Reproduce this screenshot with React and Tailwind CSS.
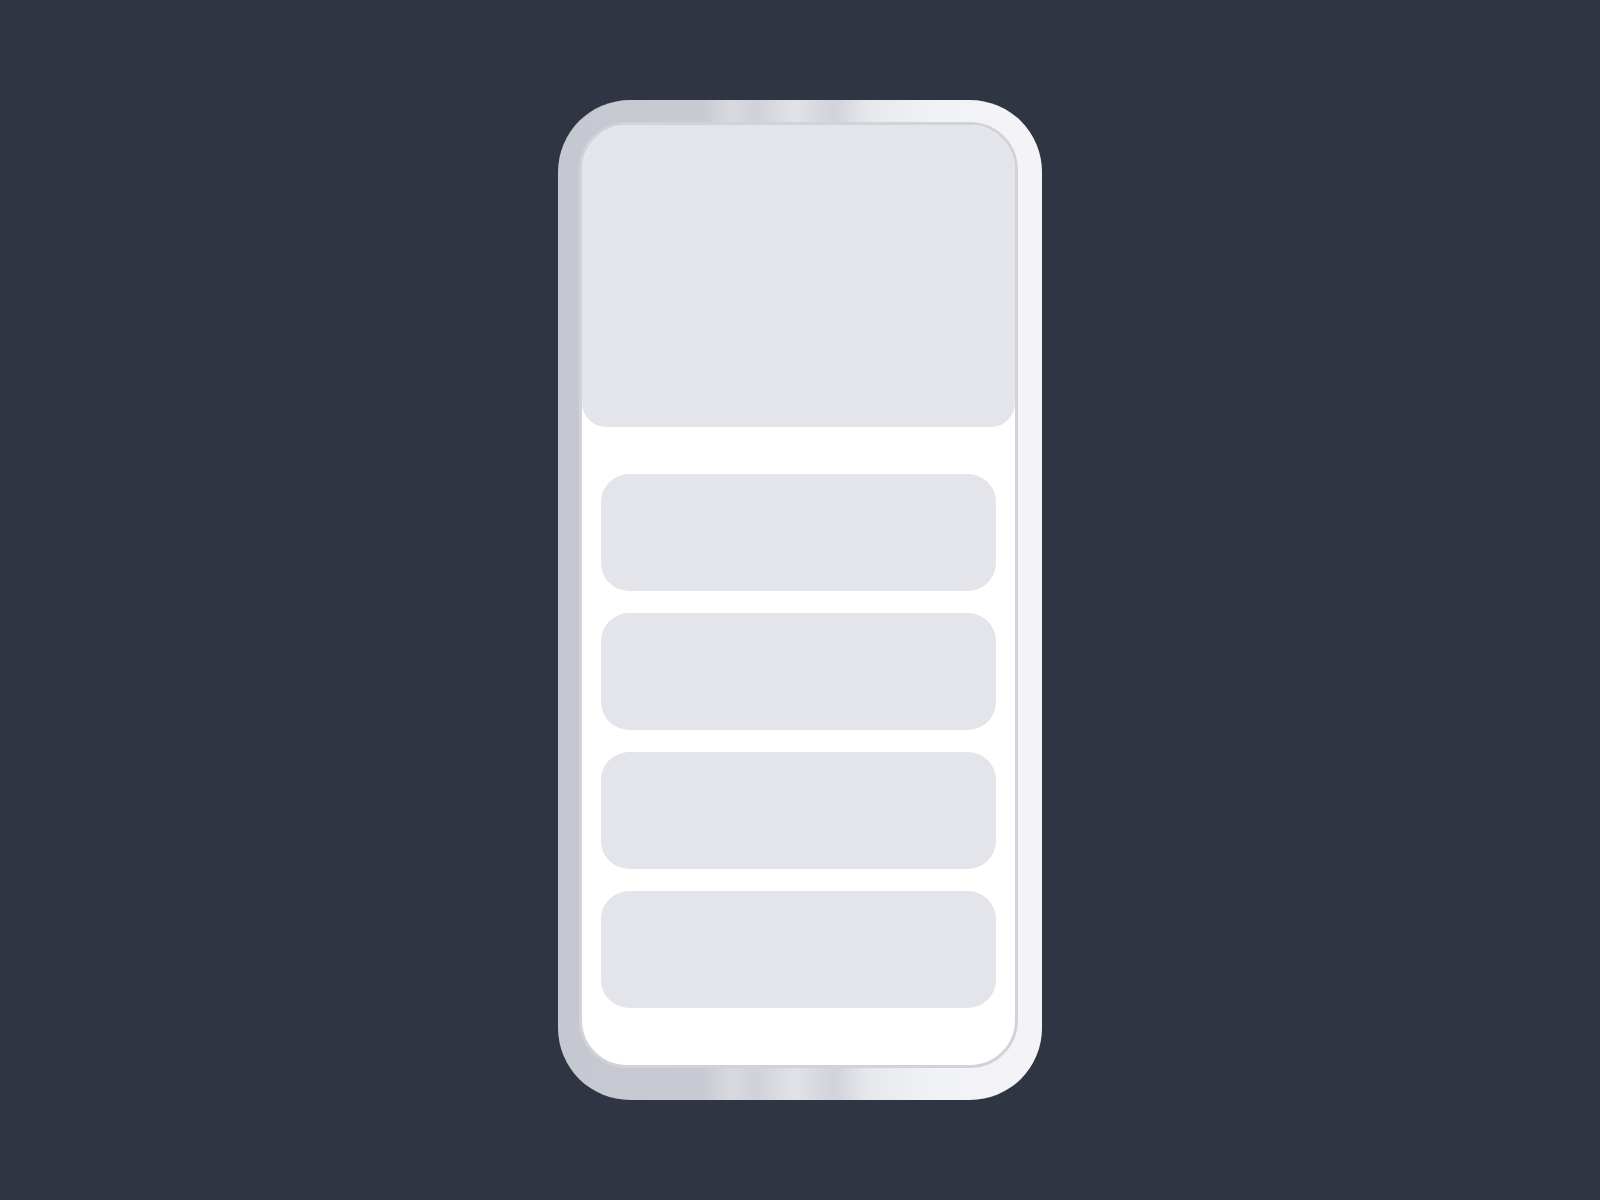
export default function App() {
  const rows = [0, 1, 2, 3]

  return (
    <div className="min-h-screen w-full bg-[#2f3542] flex items-center justify-center">
      {/* device shell */}
      <div className="w-[484px] h-[1000px] rounded-[72px] bg-[linear-gradient(90deg,#c5c7d1_0%,#c8cad3_30%,#d9dae0_36%,#d0d1d9_41%,#e2e3e8_49%,#d1d2da_57%,#e7e8ec_64%,#f1f2f5_78%,#f4f4f7_100%)] pt-[22px] pl-[21px] pr-[24px] pb-[32px] flex">
        {/* screen */}
        <div className="flex-1 rounded-[48px] border-[3px] border-[#d2d3da] bg-white overflow-hidden flex flex-col">
          <div className="h-[302px] shrink-0 bg-[#e4e5ea] rounded-b-[24px]"></div>

          <div className="flex flex-col gap-[22px] px-[19px] pt-[47px]">
            {rows.map((i) => (
              <div key={i} className="h-[117px] rounded-[28px] bg-[#e4e5ea]"></div>
            ))}
          </div>
        </div>
      </div>
    </div>
  )
}
